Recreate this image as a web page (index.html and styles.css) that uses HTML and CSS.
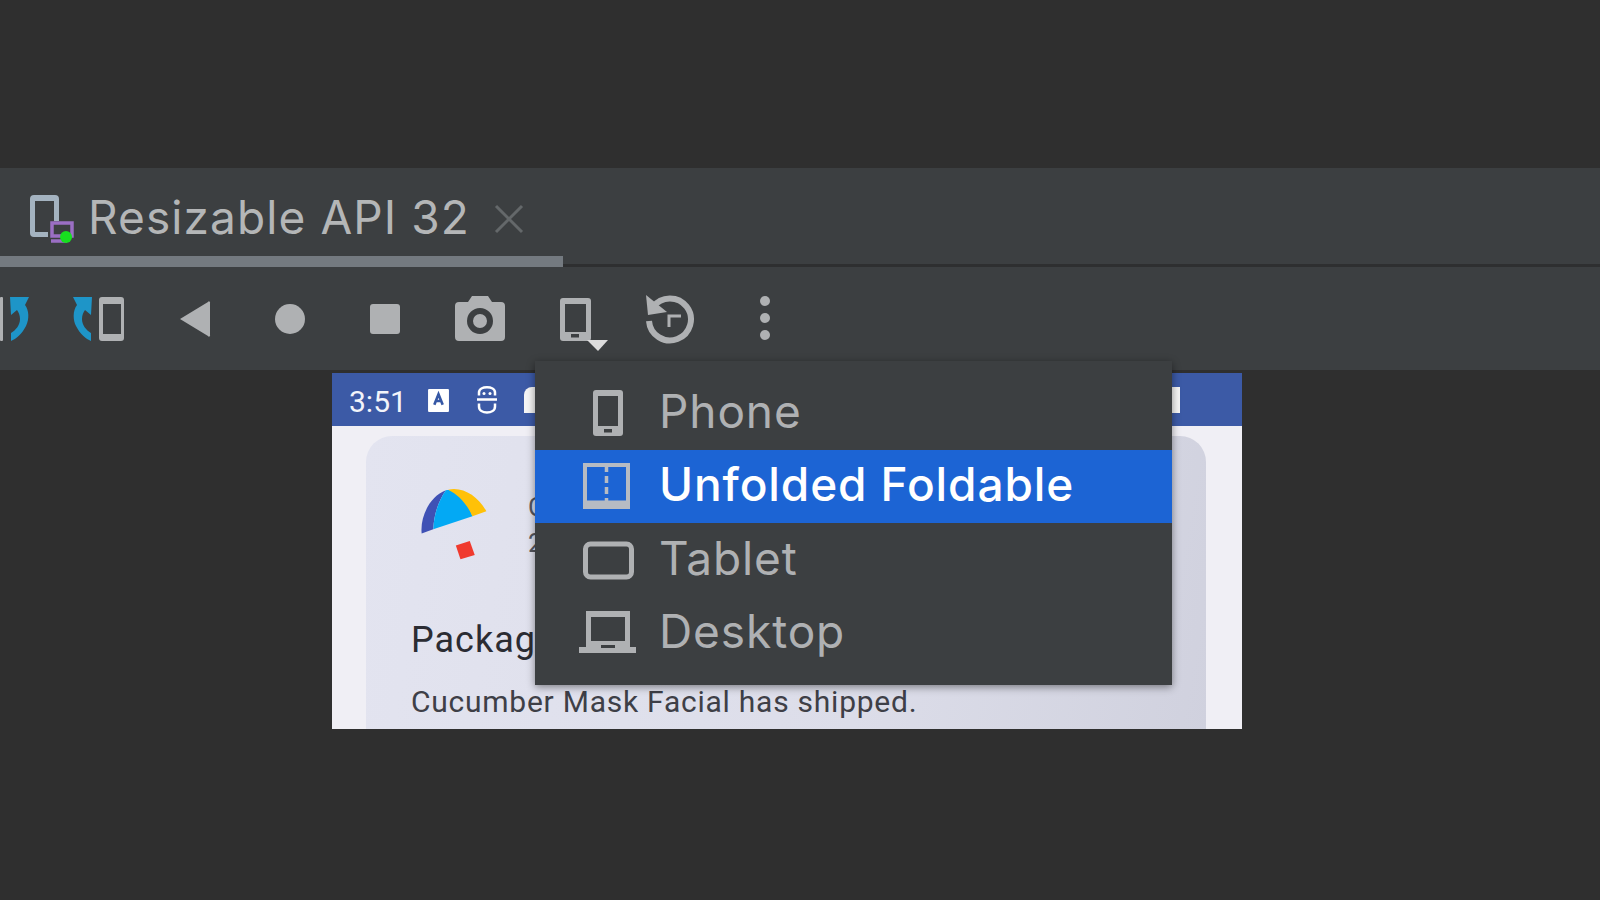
FILE: index.html
```html
<!DOCTYPE html>
<html>
  <head>
    <meta charset="utf-8" />
    <title>Resizable API 32</title>
    <link rel="stylesheet" href="styles.css">
  </head>
  <body class="page">
    <div class="panel">
      <div class="tabs">
        <div class="tab">
          <svg class="tab-icon" viewBox="0 0 46 56">
            <path d="M5 1h21a4 4 0 0 1 4 4v22h-5V7H6v31h13v5H5a4 4 0 0 1-4-4V5a4 4 0 0 1 4-4z" fill="#a4b3c0"/>
            <path d="M23 29h20v13H23zM22 47h16" fill="none" stroke="#9b6fc4" stroke-width="3.500"/>
            <circle cx="37" cy="43" r="6" fill="#17e01f"/>
          </svg>
          <span class="tab-title">Resizable API 32</span>
          <svg class="tab-close" viewBox="0 0 30 30"><path d="M2 2l26 26M28 2L2 28" stroke="#64686a" stroke-width="3"/></svg>
        </div>
      </div>
      <div class="toolbar">
        <div class="tool tool-rotate-left">
          <svg viewBox="0 0 32 52"><rect x="0" y="4" width="3" height="44" rx="1" fill="#afb1b3"/><path d="M10 4H29L25 12C29 17 29.500 26 26 33 22 41 16 46 11 48V40C16 37 20 32 20 26 20 22 18.500 19 17 17L11 22z" fill="#1e95c8"/></svg>
        </div>
        <div class="tool tool-rotate-right">
          <svg viewBox="0 0 54 52"><g transform="translate(29 0) scale(-1 1)"><path d="M10 4H29L25 12C29 17 29.500 26 26 33 22 41 16 46 11 48V40C16 37 20 32 20 26 20 22 18.500 19 17 17L11 22z" fill="#1e95c8"/></g><path d="M29 4h19a3 3 0 0 1 3 3v38a3 3 0 0 1-3 3H29a3 3 0 0 1-3-3V7a3 3 0 0 1 3-3zM30 11v30h18V11z" fill="#afb1b3" fill-rule="evenodd"/></svg>
        </div>
        <div class="tool"><svg viewBox="0 0 52 52"><path d="M11 26 L39 9 a1 1 0 0 1 2 1 V42 a1 1 0 0 1 -2 1z" fill="#afb1b3"/></svg></div>
        <div class="tool"><svg viewBox="0 0 52 52"><circle cx="26" cy="26" r="15" fill="#afb1b3"/></svg></div>
        <div class="tool"><svg viewBox="0 0 52 52"><rect x="11" y="11" width="30" height="30" rx="3" fill="#afb1b3"/></svg></div>
        <div class="tool">
          <svg viewBox="0 0 52 52"><path d="M5 9h9l4-6h16l4 6h9a4 4 0 0 1 4 4v31a4 4 0 0 1-4 4H5a4 4 0 0 1-4-4V13a4 4 0 0 1 4-4z" fill="#afb1b3"/><circle cx="26" cy="28" r="10" fill="none" stroke="#3c3f41" stroke-width="6"/></svg>
        </div>
        <div class="tool tool-device">
          <svg viewBox="0 0 70 60"><path d="M23 5h25a3 3 0 0 1 3 3v37a3 3 0 0 1-3 3H23a3 3 0 0 1-3-3V8a3 3 0 0 1 3-3z" fill="#afb1b3"/><rect x="25" y="11" width="21" height="28" fill="#3c3f41"/><rect x="31" y="41" width="8" height="3.500" fill="#3c3f41"/><path d="M47 47h21L58 58z" fill="#dcdcdc"/></svg>
        </div>
        <div class="tool">
          <svg viewBox="0 0 52 52"><path d="M9 14a21 21 0 1 1-4 14" fill="none" stroke="#afb1b3" stroke-width="6"/><path d="M2 2l2 20 19-3z" fill="#afb1b3"/><path d="M25 34V23h12" fill="none" stroke="#afb1b3" stroke-width="3"/></svg>
        </div>
        <div class="tool"><svg viewBox="0 0 52 52"><circle cx="26" cy="8" r="5" fill="#afb1b3"/><circle cx="26" cy="25" r="5" fill="#afb1b3"/><circle cx="26" cy="42" r="5" fill="#afb1b3"/></svg></div>
      </div>
    </div>

    <div class="stage">
      <div class="device">
        <div class="statusbar">
          <span class="clock">3:51</span>
          <svg class="status-a" viewBox="0 0 20 22"><rect width="20" height="22" rx="1" fill="#fff"/><path d="M6 15l4-10 4 10M7.500 11.500h5" fill="none" stroke="#3557a5" stroke-width="2.500"/></svg>
          <svg class="status-s" viewBox="0 0 22 28">
            <path d="M3 10V7c0-7 16-7 16 0v3M1 14h20M3 18v3c0 8 16 8 16 0v-3" fill="none" stroke="#fff" stroke-width="2.500"/>
            <circle cx="8" cy="8" r="1.500" fill="#fff"/>
            <circle cx="14" cy="8" r="1.500" fill="#fff"/>
          </svg>
          <span class="status-home"></span>
          <span class="status-end"></span>
        </div>
        <div class="screen">
          <div class="card">
            <div class="card-head">
              <svg class="umbrella" viewBox="300 385 205 220">
                <path d="M305 522C300 470 330 410 378 392 355 425 342 465 340 509z" fill="#3f51b5"/>
                <path d="M340 509C342 465 355 425 378 392 415 385 445 430 458 470z" fill="#03a9f4"/>
                <path d="M385 390C430 380 475 410 500 455L458 470C440 430 415 405 385 390z" fill="#ffc107"/>
                <path d="M408 558L450 545 465 587 422 600z" fill="#f03a2e"/>
              </svg>
              <div class="sender">
                <p class="sender-name">C</p>
                <p class="sender-time">2</p>
              </div>
            </div>
            <p class="card-title">Package</p>
            <p class="card-text">Cucumber Mask Facial has shipped.</p>
          </div>
        </div>
      </div>
      <div class="menu">
        <div class="menu-item">
          <svg class="menu-icon" viewBox="0 0 60 50"><path d="M18 2h24a3 3 0 0 1 3 3v40a3 3 0 0 1-3 3H18a3 3 0 0 1-3-3V5a3 3 0 0 1 3-3z" fill="#afb1b3"/><rect x="20" y="8" width="20" height="30" fill="#3c3f41"/><rect x="26" y="41" width="8" height="3.500" fill="#3c3f41"/></svg>
          <span>Phone</span>
        </div>
        <div class="menu-item menu-item-active">
          <svg class="menu-icon" viewBox="0 0 60 50"><path d="M7 4h43v42H7z" fill="none" stroke="#b6bbc3" stroke-width="4"/><path d="M7 42h43" stroke="#b6bbc3" stroke-width="5"/><path d="M28.500 4v36" stroke="#b6bbc3" stroke-width="3.500" stroke-dasharray="7 4"/></svg>
          <span>Unfolded Foldable</span>
        </div>
        <div class="menu-item">
          <svg class="menu-icon" viewBox="0 0 60 50"><rect x="7.500" y="9" width="46" height="33" rx="5" fill="none" stroke="#afb1b3" stroke-width="5"/></svg>
          <span>Tablet</span>
        </div>
        <div class="menu-item">
          <svg class="menu-icon" viewBox="0 0 60 50"><path d="M8 3h44v36h6v6H1v-6h7z" fill="#afb1b3"/><rect x="13" y="9" width="34" height="24" fill="#3c3f41"/><rect x="23" y="37" width="14" height="3" fill="#3c3f41"/></svg>
          <span>Desktop</span>
        </div>
      </div>
    </div>
  </body>
</html>
```

FILE: styles.css
```css
html,
body {
  margin: 0;
  height: 100%;
}

.page {
  background: #2f2f2f;
  padding-top: 168px;
  box-sizing: border-box;
  overflow: hidden;
  font-family: "Inter", "Liberation Sans", sans-serif;
}

.panel {
  background: #3c3f41;
  height: 202px;
}

.tabs {
  height: 99px;
  border-bottom: 3px solid #2e2f30;
  box-sizing: border-box;
}

.tab {
  width: 563px;
  height: 99px;
  box-sizing: border-box;
  border-bottom: 11px solid #747a80;
  padding-left: 29px;
  display: flex;
  align-items: center;
}

.tab-icon {
  width: 46px;
  height: 56px;
  flex: none;
  margin-top: 20px;
}

.tab-title {
  margin-left: 13px;
  margin-top: 10px;
  font-size: 46px;
  letter-spacing: 1.1px;
  color: #b4b6b7;
  white-space: nowrap;
}

.tab-close {
  width: 30px;
  height: 30px;
  margin-left: 24px;
  margin-top: 14px;
}

.toolbar {
  height: 103px;
  display: flex;
  align-items: center;
}

.tool {
  width: 95px;
  display: flex;
  justify-content: center;
  flex: none;
}

.tool svg {
  width: 52px;
  height: 52px;
  display: block;
}

.tool-rotate-left {
  width: 32px;
  justify-content: flex-start;
}

.tool-rotate-left svg {
  width: 32px;
}

.tool-rotate-right {
  width: 115px;
  padding-left: 41px;
  box-sizing: border-box;
  justify-content: flex-start;
}

.tool-rotate-right svg {
  width: 54px;
}

.tool-device svg {
  width: 70px;
  height: 60px;
  margin-top: 8px;
  flex: none;
}

.stage {
  position: relative;
  padding: 3px 0 0 332px;
}

.device {
  width: 910px;
  height: 356px;
  overflow: hidden;
  background: #f0eff5;
}

.statusbar {
  height: 53px;
  background: #3c5aa6;
  display: flex;
  align-items: center;
  padding-left: 17px;
  position: relative;
}

.clock {
  font-family: "Roboto", sans-serif;
  font-size: 30px;
  color: #f2f4fa;
  padding-top: 3px;
}

.status-a {
  width: 21px;
  height: 23px;
  margin-left: 21px;
  margin-top: 2px;
}

.status-s {
  width: 22px;
  height: 29px;
  margin-left: 27px;
}

.status-home {
  width: 20px;
  height: 26px;
  margin-left: 26px;
  background: #f5f5f5;
  border-radius: 8px 8px 0 0;
}

.status-end {
  position: absolute;
  left: 840px;
  top: 14px;
  width: 8px;
  height: 26px;
  background: #f5f5f5;
}

.screen {
  padding: 10px 36px 0 34px;
}

.card {
  height: 320px;
  box-sizing: border-box;
  padding: 50px 44px 0 45px;
  border-radius: 26px 26px 0 0;
  background: linear-gradient(100deg, #e3e4f0 0%, #dcdde9 60%, #d0d1de 100%);
}

.card-head {
  display: flex;
  height: 75px;
}

.umbrella {
  width: 68px;
  height: 73px;
  flex: none;
  margin: 2px 0 0 9px;
}

.sender {
  margin: 6px 0 0 40px;
  font-family: "Roboto", sans-serif;
  font-size: 26px;
  color: #55565e;
}

.sender p {
  margin: 0 0 6px;
}

.card-title {
  margin: 59px 0 0;
  font-family: "Roboto", sans-serif;
  font-size: 36px;
  letter-spacing: 1px;
  line-height: 40px;
  color: #2b2c33;
  white-space: nowrap;
}

.card-text {
  margin: 24px 0 0;
  font-family: "Roboto", sans-serif;
  font-size: 30px;
  letter-spacing: 0.75px;
  line-height: 36px;
  color: #3e3f47;
  white-space: nowrap;
}

.menu {
  position: absolute;
  left: 535px;
  top: -9px;
  width: 637px;
  height: 324px;
  padding-top: 15px;
  box-sizing: border-box;
  background: #3c3f41;
  box-shadow: 0 2px 8px rgba(0, 0, 0, 0.45);
}

.menu-item {
  height: 73.500px;
  display: flex;
  align-items: center;
  padding-left: 43px;
  font-size: 46px;
  letter-spacing: 0.9px;
  color: #afb1b3;
}

.menu-item span {
  padding-bottom: 4px;
}

.menu-item-active {
  background: #1c64d4;
  color: #fff;
  font-weight: 500;
}

.menu-icon {
  width: 60px;
  height: 50px;
  flex: none;
  margin-right: 21px;
}
```
